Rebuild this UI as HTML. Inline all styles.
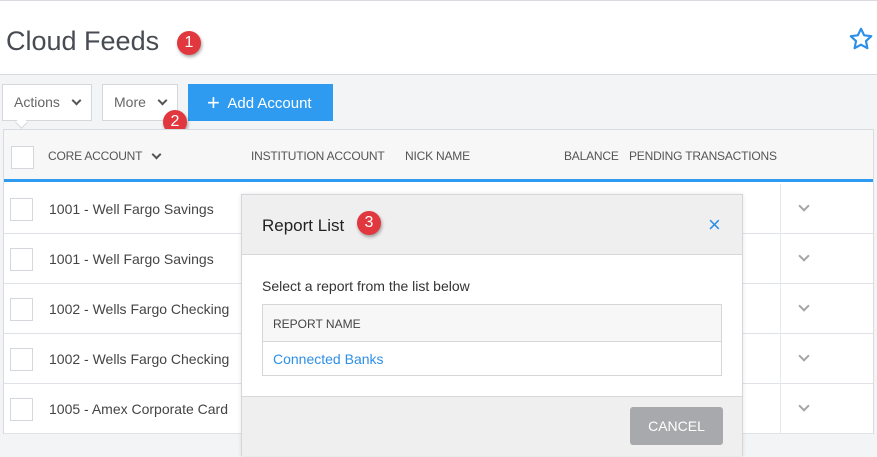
<!DOCTYPE html>
<html><head><meta charset="utf-8"><style>
*{box-sizing:border-box;margin:0;padding:0}
body{width:877px;height:457px;overflow:hidden;background:#f3f4f6;font-family:"Liberation Sans",sans-serif;color:#444;position:relative}
.abs{position:absolute}
.badge{position:absolute;width:24px;height:24px;border-radius:50%;background:#e0383e;color:#fff;font-size:16px;text-align:center;line-height:24px;box-shadow:1px 2px 3px rgba(0,0,0,.35)}
.btn{position:absolute;top:84px;height:37px;background:#fff;border:1px solid #d4d8dd;font-size:14px;color:#666;line-height:35px;padding-left:11px}
.chev{display:inline-block;width:7px;height:7px;border-right:2px solid #555;border-bottom:2px solid #555;transform:rotate(45deg);vertical-align:middle;margin-top:-6px}
.cb{position:absolute;left:10px;width:23px;height:23px;border:1px solid #d4d8dd;background:#fff}
.th{position:absolute;top:149px;font-size:12px;color:#555;letter-spacing:-0.2px}
.row{position:absolute;left:4px;width:869px;height:50px;background:#fff;border-bottom:1px solid #dfe2e6}
.rt{position:absolute;left:45px;top:17px;font-size:14px;color:#444}
.gch{position:absolute;left:796px;top:18px;width:8px;height:8px;border-right:2px solid #a5a5a5;border-bottom:2px solid #a5a5a5;transform:rotate(45deg)}
</style></head><body>
<div class="abs" style="left:0;top:0;width:877px;height:75px;background:#fff;border-top:1px solid #d8dce0;border-bottom:1px solid #d8dce0"></div>
<div class="abs" style="left:6px;top:26px;font-size:27px;color:#474b52">Cloud Feeds</div>
<div class="badge" style="left:177px;top:31px">1</div>
<svg class="abs" style="left:848px;top:26px" width="26" height="26" viewBox="0 0 24 24"><path d="M12 2.5l2.9 6.1 6.6.8-4.9 4.5 1.3 6.6L12 17.2l-5.9 3.3 1.3-6.6-4.9-4.5 6.6-.8z" fill="none" stroke="#2d8fe6" stroke-width="2" stroke-linejoin="round"/></svg>

<div class="btn" style="left:2px;width:90px">Actions <span class="chev" style="margin-left:9px"></span></div>
<div class="abs" style="left:17px;top:118px;width:9px;height:9px;background:#fff;border-right:1px solid #d4d8dd;border-bottom:1px solid #d4d8dd;transform:rotate(45deg)"></div>
<div class="btn" style="left:102px;width:76px">More <span class="chev" style="margin-left:9px"></span></div>
<div class="abs" style="left:188px;top:84px;width:145px;height:37px;background:#2e9bf0;color:#fff;font-size:15px;line-height:37px;padding-left:19px"><span style="font-size:22px;vertical-align:-2px;font-weight:300">+</span>&nbsp; Add Account</div>
<div class="badge" style="left:163px;top:110px">2</div>

<div class="abs" style="left:3px;top:129px;width:871px;height:305px;background:#fff;border:1px solid #d8dce0"></div>
<div class="abs" style="left:4px;top:130px;width:869px;height:52px;background:#f7f7f8;border-bottom:3px solid #2e9bf0"></div>
<div class="cb" style="top:146px;left:11px"></div>
<div class="th" style="left:48px">CORE ACCOUNT <span class="chev" style="margin-left:8px;margin-top:-4px"></span></div>
<div class="th" style="left:251px">INSTITUTION ACCOUNT</div>
<div class="th" style="left:405px">NICK NAME</div>
<div class="th" style="left:564px">BALANCE</div>
<div class="th" style="left:629px">PENDING TRANSACTIONS</div>

<div class="row" style="top:184px"><div class="cb" style="top:14px;left:6px"></div><div class="rt">1001 - Well Fargo Savings</div><div class="gch"></div></div>
<div class="row" style="top:234px"><div class="cb" style="top:14px;left:6px"></div><div class="rt">1001 - Well Fargo Savings</div><div class="gch"></div></div>
<div class="row" style="top:284px"><div class="cb" style="top:14px;left:6px"></div><div class="rt">1002 - Wells Fargo Checking</div><div class="gch"></div></div>
<div class="row" style="top:334px"><div class="cb" style="top:14px;left:6px"></div><div class="rt">1002 - Wells Fargo Checking</div><div class="gch"></div></div>
<div class="row" style="top:384px"><div class="cb" style="top:14px;left:6px"></div><div class="rt">1005 - Amex Corporate Card</div><div class="gch"></div></div>
<div class="abs" style="left:780px;top:184px;width:1px;height:249px;background:#e6e8eb"></div>

<div class="abs" style="left:241px;top:194px;width:502px;height:262px;background:#fff;border:1px solid #d4d6d9;box-shadow:0 0 4px rgba(0,0,0,.1)">
 <div class="abs" style="left:0;top:0;width:500px;height:60px;background:#efefef;border-bottom:1px solid #d8d8d8"></div>
 <div class="abs" style="left:20px;top:21px;font-size:17px;color:#222">Report List</div>
 <div class="badge" style="left:115px;top:16px">3</div>
 <div class="abs" style="left:466px;top:17px;font-size:22px;color:#2e8fe6">×</div>
 <div class="abs" style="left:20px;top:83px;font-size:14px;color:#333">Select a report from the list below</div>
 <div class="abs" style="left:20px;top:109px;width:460px;height:72px;border:1px solid #d4d6d9">
  <div style="height:37px;background:#f7f7f7;border-bottom:1px solid #d4d6d9;font-size:12px;color:#444;padding:12px 0 0 10px">REPORT NAME</div>
  <div style="font-size:14px;color:#2e8fe6;padding:9px 0 0 10px">Connected Banks</div>
 </div>
 <div class="abs" style="left:0;top:201px;width:500px;height:60px;background:#efefef;border-top:1px solid #d8d8d8"></div>
 <div class="abs" style="left:388px;top:212px;width:93px;height:38px;background:#a7a9ac;border-radius:3px;color:#fff;font-size:14px;text-align:center;line-height:38px">CANCEL</div>
</div>
</body></html>
